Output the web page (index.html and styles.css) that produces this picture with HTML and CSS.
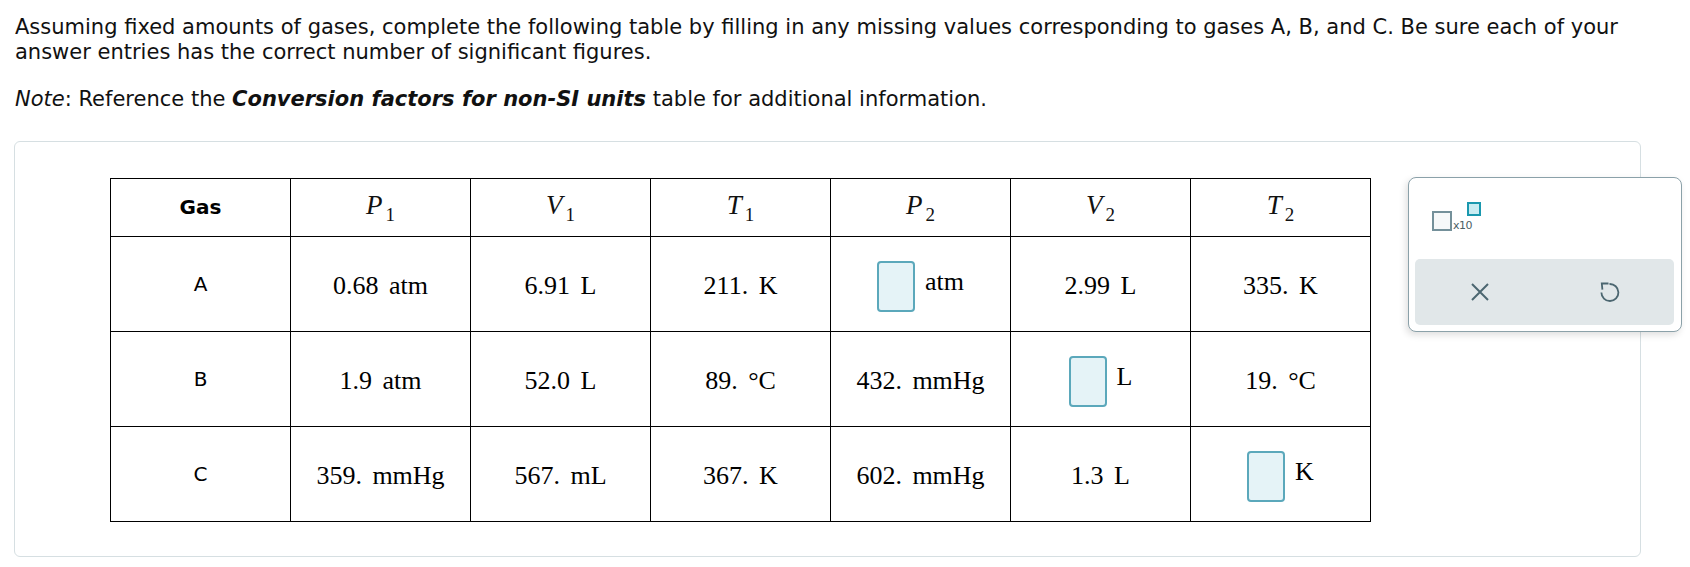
FILE: index.html
```html
<!DOCTYPE html>
<html>
<head>
<meta charset="utf-8">
<title>Gas law table</title>
<link rel="stylesheet" href="styles.css">
</head>
<body>
<div class="page">
  <p class="intro">Assuming fixed amounts of gases, complete the following table by filling in any missing values corresponding to gases A, B, and C. Be sure each of your answer entries has the correct number of significant figures.</p>
  <p class="note"><em>Note</em>: Reference the <strong><em>Conversion factors for non-SI units</em></strong> table for additional information.</p>

  <div class="panel">
    <table class="gas-table">
      <tr class="head">
        <th class="label">Gas</th>
        <th><span class="sym">P</span><span class="sub">1</span></th>
        <th><span class="sym">V</span><span class="sub">1</span></th>
        <th><span class="sym">T</span><span class="sub">1</span></th>
        <th><span class="sym">P</span><span class="sub">2</span></th>
        <th><span class="sym">V</span><span class="sub">2</span></th>
        <th><span class="sym">T</span><span class="sub">2</span></th>
      </tr>
      <tr class="row">
        <td class="label">A</td>
        <td class="val">0.68 atm</td>
        <td class="val">6.91 L</td>
        <td class="val">211. K</td>
        <td class="val"><span class="answer"><span class="box"></span><span class="unit">atm</span></span></td>
        <td class="val">2.99 L</td>
        <td class="val">335. K</td>
      </tr>
      <tr class="row">
        <td class="label">B</td>
        <td class="val">1.9 atm</td>
        <td class="val">52.0 L</td>
        <td class="val">89. °C</td>
        <td class="val">432. mmHg</td>
        <td class="val"><span class="answer"><span class="box"></span><span class="unit">L</span></span></td>
        <td class="val">19. °C</td>
      </tr>
      <tr class="row">
        <td class="label">C</td>
        <td class="val">359. mmHg</td>
        <td class="val">567. mL</td>
        <td class="val">367. K</td>
        <td class="val">602. mmHg</td>
        <td class="val">1.3 L</td>
        <td class="val"><span class="answer"><span class="box"></span><span class="unit">K</span></span></td>
      </tr>
    </table>
  </div>

  <div class="palette">
    <div class="palette-top">
      <span class="sci">
        <span class="sci-base"></span><span class="sci-x">x10</span><span class="sci-exp"></span>
      </span>
    </div>
    <div class="palette-bar">
      <button class="pbtn" aria-label="clear">
        <svg width="18" height="18" viewBox="0 0 18 18"><path d="M1 1 L17 17 M17 1 L1 17" stroke="#4b6670" stroke-width="2" fill="none"/></svg>
      </button>
      <button class="pbtn" aria-label="undo">
        <svg width="21" height="22" viewBox="0 0 21 22"><path d="M9.5 2.5 H2.8 L3.4 8.6" fill="none" stroke="#4b6670" stroke-width="1.8" stroke-linejoin="miter"/><path d="M2.4 11.5 A8.5 8.5 0 1 0 10.5 3" fill="none" stroke="#4b6670" stroke-width="1.8"/></svg>
      </button>
    </div>
  </div>
</div>
</body>
</html>
```

FILE: styles.css
```css
html, body {
  margin: 0;
  padding: 0;
  background: #ffffff;
}

.page {
  position: relative;
  padding: 15px 14px 10px 14px;
  font-family: "DejaVu Sans", Verdana, sans-serif;
  font-size: 21px;
  line-height: 25px;
  color: #111111;
}

.intro {
  margin: 0 0 22px 1px;
}

.note {
  margin: 0 0 29px 1px;
}

.panel {
  width: 1627px;
  height: 416px;
  box-sizing: border-box;
  border: 1px solid #d6dfe2;
  border-radius: 6px;
  padding: 36px 0 0 95px;
}

.gas-table {
  border-collapse: collapse;
  table-layout: fixed;
  width: 1261px;
}

.gas-table th,
.gas-table td {
  border: 1px solid #000000;
  padding: 0;
  text-align: center;
  vertical-align: middle;
}

.head {
  height: 58px;
}

.row {
  height: 95px;
}

.gas-table .label {
  font-family: "DejaVu Sans", Verdana, sans-serif;
  font-size: 20px;
  font-weight: normal;
  color: #000;
}

.gas-table th.label {
  font-weight: bold;
}

.sym {
  font-family: "Liberation Serif", "Times New Roman", serif;
  font-style: italic;
  font-weight: normal;
  font-size: 27px;
  line-height: 30px;
}

.sub {
  font-family: "Liberation Serif", "Times New Roman", serif;
  font-weight: normal;
  font-size: 19px;
  line-height: 20px;
  vertical-align: -7px;
  margin-left: 3px;
}

.val {
  font-family: "Liberation Serif", "Times New Roman", serif;
  font-size: 26px;
  line-height: 30px;
  word-spacing: 4px;
  color: #000;
  padding-top: 4px !important;
}

.answer {
  display: inline-flex;
  align-items: center;
  gap: 10px;
  vertical-align: middle;
}

.box {
  display: block;
  width: 38px;
  height: 51px;
  box-sizing: border-box;
  border: 2px solid #5ba8bb;
  border-radius: 4px;
  background: #e5f3f7;
}

.unit {
  padding-bottom: 8px;
  line-height: 30px;
}

.palette {
  position: absolute;
  left: 1408px;
  top: 177px;
  width: 274px;
  height: 155px;
  box-sizing: border-box;
  border: 1px solid #8ba1a9;
  border-radius: 8px;
  background: #ffffff;
  box-shadow: -2px 3px 7px rgba(0, 0, 0, 0.13);
  padding: 0 7px 6px 6px;
  display: flex;
  flex-direction: column;
}

.palette-top {
  height: 81px;
  padding: 24px 0 0 17px;
  box-sizing: border-box;
}

.sci {
  display: flex;
  align-items: flex-start;
  height: 32px;
}

.sci-base {
  display: block;
  width: 20px;
  height: 20px;
  box-sizing: border-box;
  border: 2px solid #74909a;
  background: #f6f8f9;
  margin-top: 9px;
}

.sci-x {
  font-family: "DejaVu Sans", Verdana, sans-serif;
  font-size: 11px;
  line-height: 11px;
  color: #4b5f66;
  margin-top: 18px;
  margin-left: 1px;
  letter-spacing: -0.5px;
}

.sci-exp {
  display: block;
  width: 14px;
  height: 14px;
  box-sizing: border-box;
  border: 2px solid #1a98ae;
  background: #c9ecf2;
  margin-left: -5px;
}

.palette-bar {
  flex: 1;
  display: flex;
  background: #e1e7e9;
  border-radius: 5px;
}

.pbtn {
  flex: 1;
  border: none;
  background: transparent;
  padding: 0;
  display: flex;
  align-items: center;
  justify-content: center;
}

.pbtn svg {
  display: block;
}
```
